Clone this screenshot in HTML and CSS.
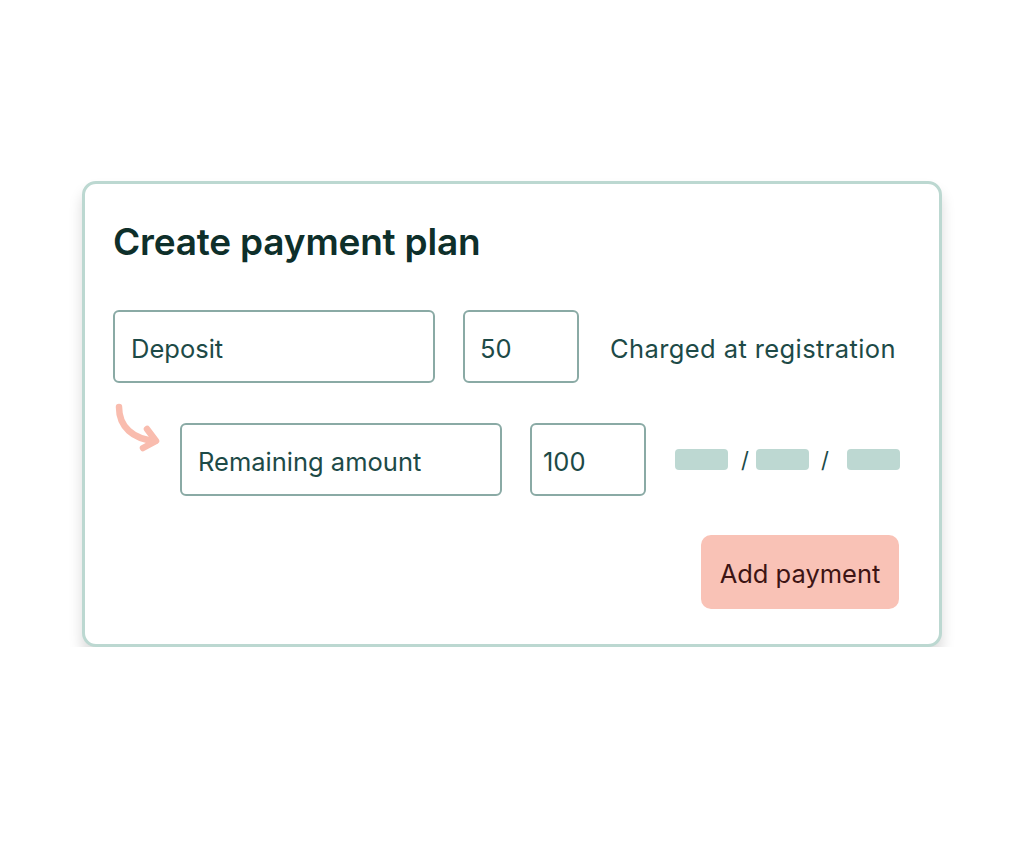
FILE: index.html
```html
<!DOCTYPE html>
<html lang="en">

<head>
    <meta charset="UTF-8">
    <meta name="viewport" content="width=device-width, initial-scale=1.0">
    <title>Create payment plan</title>
    <link rel="stylesheet" href="styles.css">
</head>

<body>

    <div class="card">
        <h2>Create payment plan</h2>

        <div class="plan-row">
            <div class="field name-field">Deposit</div>
            <div class="field amount-field">50</div>
            <div class="note">Charged at registration</div>
        </div>

        <div class="plan-row sub-row">
            <svg class="arrow" width="50" height="56" viewBox="0 0 50 56">
                <path d="M6 6 C 6 26, 20 38, 42 40" fill="none" stroke="#f9bcae" stroke-width="6.5" stroke-linecap="round" />
                <path d="M34 28 L 43 40 L 30 47" fill="none" stroke="#f9bcae" stroke-width="6.5" stroke-linecap="round" stroke-linejoin="round" />
            </svg>
            <div class="field name-field">Remaining amount</div>
            <div class="field amount-field">100</div>
            <div class="date">
                <span class="blank"></span>
                <span class="slash">/</span>
                <span class="blank"></span>
                <span class="slash">/</span>
                <span class="blank"></span>
            </div>
        </div>

        <div class="actions">
            <button class="add-btn">Add payment</button>
        </div>
    </div>

</body>
</html>
```

FILE: styles.css
```css
body {
    font-family: Inter, "Open Sans", sans-serif;
    background-color: #ffffff;
    margin: 0;
    padding: 181px 0 0 82px;
}

.card {
    box-sizing: border-box;
    width: 860px;
    height: 466px;
    border: 3px solid #bcd8d1;
    border-radius: 14px;
    background: white;
    box-shadow: 0 10px 14px rgba(0, 0, 0, 0.15);
    padding: 36px 40px 0 28px;
}

h2 {
    margin: 0;
    font-size: 37px;
    font-weight: 600;
    line-height: 44px;
    letter-spacing: -0.2px;
    color: #0e2f2a;
}

.plan-row {
    display: flex;
    align-items: center;
    margin-top: 46px;
}

.sub-row {
    margin-top: 40px;
    position: relative;
    padding-left: 67px;
}

.arrow {
    position: absolute;
    left: 0;
    top: -22px;
}

.field {
    box-sizing: border-box;
    flex-shrink: 0;
    height: 73px;
    border: 2px solid #8aaaa5;
    border-radius: 6px;
    padding: 3px 16px 0;
    display: flex;
    align-items: center;
    font-size: 25.5px;
    color: #1d4a47;
}

.name-field {
    width: 322px;
}

.amount-field {
    width: 116px;
    margin-left: 28px;
    padding: 3px 10px 0 15px;
}

.sub-row .amount-field {
    padding-left: 11px;
}

.note {
    margin-left: 31px;
    padding-top: 3px;
    font-size: 25.5px;
    letter-spacing: 0.4px;
    white-space: nowrap;
    color: #1d4a47;
}

.date {
    display: flex;
    align-items: center;
    margin-left: 29px;
}

.blank {
    display: block;
    width: 53px;
    height: 21px;
    border-radius: 4px;
    background-color: #bdd8d2;
}

.slash {
    font-size: 22px;
    color: #1d4a47;
    margin: 0 7px 0 13px;
}

.slash + .blank + .slash {
    margin: 0 18px 0 12px;
}

.actions {
    display: flex;
    justify-content: flex-end;
    margin-top: 39px;
}

.add-btn {
    width: 198px;
    height: 74px;
    border: none;
    border-radius: 10px;
    padding-top: 3px;
    background-color: #f9c2b6;
    color: #3d1414;
    font-family: Inter, "Open Sans", sans-serif;
    font-size: 25.5px;
    cursor: pointer;
}
```
